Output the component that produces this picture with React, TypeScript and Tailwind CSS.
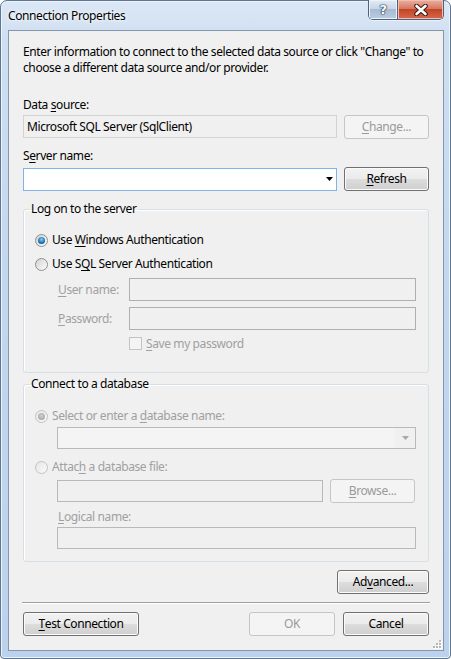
import React from "react";

const F = "font-['Noto_Sans',sans-serif] text-[12px] tracking-[-0.4px] leading-[16px]";

const btnBase =
  "flex items-center justify-center rounded-[3px] border h-[24px] shrink-0";
const btnOn =
  "border-[#707070] text-black bg-[linear-gradient(#f2f2f2_0%,#ebebeb_50%,#dddddd_50%,#cfcfcf_100%)] shadow-[inset_0_0_0_1px_#fbfbfb]";
const btnOff = "border-[#c4c6c8] text-[#9a9a9a] bg-[#f4f4f4]";

function U({ children }: { children: React.ReactNode }) {
  return <span className="underline underline-offset-[2px] decoration-[1px]">{children}</span>;
}

function Btn({
  children,
  disabled,
  w,
}: {
  children: React.ReactNode;
  disabled?: boolean;
  w: string;
}) {
  return <div className={`${btnBase} ${disabled ? btnOff : btnOn} ${w}`}>{children}</div>;
}

function Radio({ checked, disabled }: { checked?: boolean; disabled?: boolean }) {
  return (
    <span
      className={`relative flex items-center justify-center w-[13px] h-[13px] rounded-full border shrink-0 ${
        disabled
          ? "border-[#c2c2c2] bg-[linear-gradient(135deg,#e6e6e6,#fafafa)]"
          : "border-[#8e8f8f] bg-[linear-gradient(135deg,#d2d2d2,#fdfdfd)]"
      }`}
    >
      {checked && (
        <span
          className={`w-[7px] h-[7px] rounded-full ${
            disabled
              ? "bg-[radial-gradient(circle_at_50%_40%,#d0d0d0,#9a9a9a)]"
              : "bg-[radial-gradient(circle_at_50%_35%,#7fd0fa,#1d6fb0_60%,#0b3f74)]"
          }`}
        />
      )}
    </span>
  );
}

function Arrow({ color }: { color: string }) {
  return (
    <svg width="7" height="4" viewBox="0 0 7 4" className="shrink-0">
      <path d="M0 0 H7 L3.5 4 Z" fill={color} />
    </svg>
  );
}

function Grip() {
  const dots = [
    [6, 0],
    [3, 3],
    [6, 3],
    [0, 6],
    [3, 6],
    [6, 6],
  ];
  return (
    <svg width="9" height="9" viewBox="0 0 9 9">
      {dots.map(([x, y], i) => (
        <g key={i}>
          <rect x={x + 1} y={y + 1} width="2" height="2" fill="#ffffff" />
          <rect x={x} y={y} width="2" height="2" fill="#b8b8b8" />
        </g>
      ))}
    </svg>
  );
}

export default function App() {
  return (
    <div className={`w-[451px] h-[659px] bg-white ${F}`}>
      <div className="w-[451px] h-[659px] flex flex-col rounded-t-[7px] rounded-b-[4px] border border-[#5d7593] bg-[linear-gradient(180deg,#dbe7f5_0%,#cfdff1_6%,#c3d7ee_40%,#bcd2ec_100%)] shadow-[inset_0_0_0_1px_#eef4fb]">
        {/* Title bar */}
        <div className="h-[29px] flex items-start shrink-0">
          <div className="pl-[7px] pt-[7px] text-black [text-shadow:0_0_6px_#ffffff,0_0_3px_#ffffff]">
            Connection Properties
          </div>
          <div className="ml-auto mr-[6px] -mt-[1px] flex h-[20px] rounded-b-[5px] border border-t-0 border-[#4d627d] overflow-hidden shadow-[0_1px_0_#eaf1f9]">
            <div className="w-[29px] h-full flex items-center justify-center border-r border-[#4d627d] bg-[linear-gradient(180deg,#e2eaf4_0%,#c9d6e6_45%,#a9bbd3_50%,#b9cce2_100%)] shadow-[inset_0_0_0_1px_#eef3f9]">
              <span className="font-['DejaVu_Sans',sans-serif] font-bold text-[13px] text-white [text-shadow:0_0_1px_#1e2f45,0_0_1px_#1e2f45,0_0_2px_#1e2f45]">
                ?
              </span>
            </div>
            <div className="w-[45px] h-full flex items-center justify-center bg-[linear-gradient(180deg,#eab1a3_0%,#d7785f_45%,#c34528_50%,#d8674a_100%)] shadow-[inset_0_0_0_1px_#f0bfb0]">
              <svg width="14" height="12" viewBox="0 0 14 12">
                <path d="M2.5 2 L11.5 10 M11.5 2 L2.5 10" stroke="#3b1a14" strokeWidth="4.6" strokeLinecap="round" />
                <path d="M2.5 2 L11.5 10 M11.5 2 L2.5 10" stroke="#ffffff" strokeWidth="2.6" strokeLinecap="round" />
              </svg>
            </div>
          </div>
        </div>

        {/* Client */}
        <div className="ml-[7px] mr-[6px] mb-[7px] flex-1 border border-[#8396ae] bg-[#f0f0f0] px-[14px] flex flex-col relative">
          <p className="mt-[13px] text-black whitespace-nowrap">
            Enter information to connect to the selected data source or click "Change" to
            <br />
            choose a different data source and/or provider.
          </p>

          <div className="mt-[21px] h-[16px]">
            Data <U>s</U>ource:
          </div>
          <div className="mt-[2px] h-[24px] flex">
            <div className="w-[314px] h-[23px] border border-[#d3d3d3] bg-[#f0f0f0] pl-[3px] flex items-center">
              Microsoft SQL Server (SqlClient)
            </div>
            <div className="ml-auto">
              <Btn disabled w="w-[85px]">
                <U>C</U>hange...
              </Btn>
            </div>
          </div>

          <div className="mt-[9px] h-[16px]">
            S<U>e</U>rver name:
          </div>
          <div className="mt-[3px] h-[24px] flex items-center">
            <div className="w-[314px] h-[23px] border border-[#7eb4ea] bg-white flex items-center justify-end pr-[3px]">
              <Arrow color="#000" />
            </div>
            <div className="ml-auto">
              <Btn w="w-[85px]">
                <U>R</U>efresh
              </Btn>
            </div>
          </div>

          {/* Log on group */}
          <fieldset className="mt-[10px] border border-[#d5dfe5] rounded-[3px] pb-[22px] shadow-[inset_1px_1px_0_#ffffff]">
            <legend className="ml-[6px] px-[1px] leading-[16px]">Log on to the server</legend>
            <div className="mt-[15px] h-[16px] flex items-center pl-[11px] gap-[4px]">
              <Radio checked />
              <span>
                Use <U>W</U>indows Authentication
              </span>
            </div>
            <div className="mt-[8px] h-[16px] flex items-center pl-[11px] gap-[4px]">
              <Radio />
              <span>
                Use S<U>Q</U>L Server Authentication
              </span>
            </div>
            <div className="mt-[6px] h-[23px] flex items-center pl-[34px] text-[#a0a0a0]">
              <span className="w-[71px]">
                <U>U</U>ser name:
              </span>
              <div className="w-[287px] h-[23px] border border-[#afafaf] bg-[#f0f0f0]" />
            </div>
            <div className="mt-[6px] h-[23px] flex items-center pl-[34px] text-[#a0a0a0]">
              <span className="w-[71px]">
                <U>P</U>assword:
              </span>
              <div className="w-[287px] h-[23px] border border-[#afafaf] bg-[#f0f0f0]" />
            </div>
            <div className="mt-[7px] h-[13px] flex items-center pl-[105px] gap-[4px] text-[#a0a0a0]">
              <span className="w-[13px] h-[13px] border border-[#c4c4c4] bg-[#f4f4f4] shrink-0" />
              <span>
                <U>S</U>ave my password
              </span>
            </div>
          </fieldset>

          {/* Connect group */}
          <fieldset className="mt-[3px] border border-[#d5dfe5] rounded-[3px] pb-[12px] shadow-[inset_1px_1px_0_#ffffff]">
            <legend className="ml-[6px] px-[1px] leading-[16px]">Connect to a database</legend>
            <div className="mt-[16px] h-[16px] flex items-center pl-[11px] gap-[4px] text-[#a0a0a0]">
              <Radio checked disabled />
              <span>
                Select or enter a <U>d</U>atabase name:
              </span>
            </div>
            <div className="mt-[3px] ml-[33px] w-[359px] h-[22px] border border-[#b9b9b9] bg-[#f0f0f0] flex">
              <div className="flex-1 bg-[#f4f4f4]" />
              <div className="w-[20px] flex items-center justify-center bg-[#f0f0f0]">
                <Arrow color="#a8a8a8" />
              </div>
            </div>
            <div className="mt-[10px] h-[16px] flex items-center pl-[11px] gap-[4px] text-[#a0a0a0]">
              <Radio disabled />
              <span>
                Attac<U>h</U> a database file:
              </span>
            </div>
            <div className="mt-[4px] h-[24px] flex items-center pl-[33px]">
              <div className="w-[266px] h-[22px] border border-[#b9b9b9] bg-[#f0f0f0]" />
              <div className="ml-[7px]">
                <Btn disabled w="w-[85px]">
                  <U>B</U>rowse...
                </Btn>
              </div>
            </div>
            <div className="mt-[6px] h-[16px] pl-[34px] text-[#a0a0a0]">
              <U>L</U>ogical name:
            </div>
            <div className="mt-[2px] ml-[33px] w-[359px] h-[22px] border border-[#b9b9b9] bg-[#f0f0f0]" />
          </fieldset>

          <div className="mt-[8px] flex justify-end">
            <Btn w="w-[92px]">
              Ad<U>v</U>anced...
            </Btn>
          </div>

          <div className="mt-[8px] -mx-[1px] h-[2px] border-t border-[#a0a0a0] border-b border-b-white" />

          <div className="mt-[8px] flex">
            <Btn w="w-[116px]">
              <U>T</U>est Connection
            </Btn>
            <div className="ml-auto flex gap-[8px]">
              <Btn disabled w="w-[86px]">
                OK
              </Btn>
              <Btn w="w-[86px]">Cancel</Btn>
            </div>
          </div>

          <div className="absolute right-[1px] bottom-[1px]">
            <Grip />
          </div>
        </div>
      </div>
    </div>
  );
}
